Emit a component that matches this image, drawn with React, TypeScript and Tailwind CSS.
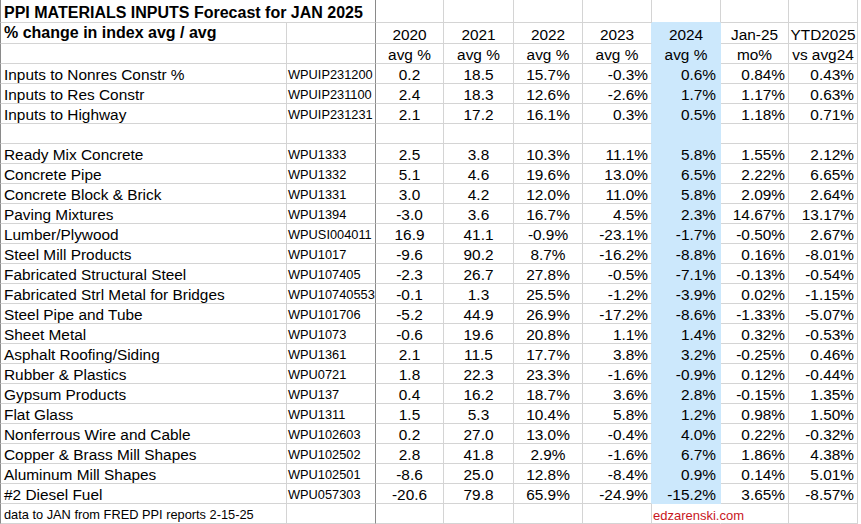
import React from "react";

type Row = [string, string, string, string, string, string, string, string, string];

const rows: (Row | null)[] = [
  ["Inputs to Nonres Constr %", "WPUIP231200", "0.2", "18.5", "15.7%", "-0.3%", "0.6%", "0.84%", "0.43%"],
  ["Inputs to Res Constr", "WPUIP231100", "2.4", "18.3", "12.6%", "-2.6%", "1.7%", "1.17%", "0.63%"],
  ["Inputs to Highway", "WPUIP231231", "2.1", "17.2", "16.1%", "0.3%", "0.5%", "1.18%", "0.71%"],
  null,
  ["Ready Mix Concrete", "WPU1333", "2.5", "3.8", "10.3%", "11.1%", "5.8%", "1.55%", "2.12%"],
  ["Concrete Pipe", "WPU1332", "5.1", "4.6", "19.6%", "13.0%", "6.5%", "2.22%", "6.65%"],
  ["Concrete Block & Brick", "WPU1331", "3.0", "4.2", "12.0%", "11.0%", "5.8%", "2.09%", "2.64%"],
  ["Paving Mixtures", "WPU1394", "-3.0", "3.6", "16.7%", "4.5%", "2.3%", "14.67%", "13.17%"],
  ["Lumber/Plywood", "WPUSI004011", "16.9", "41.1", "-0.9%", "-23.1%", "-1.7%", "-0.50%", "2.67%"],
  ["Steel Mill Products", "WPU1017", "-9.6", "90.2", "8.7%", "-16.2%", "-8.8%", "0.16%", "-8.01%"],
  ["Fabricated Structural Steel", "WPU107405", "-2.3", "26.7", "27.8%", "-0.5%", "-7.1%", "-0.13%", "-0.54%"],
  ["Fabricated Strl Metal for Bridges", "WPU10740553", "-0.1", "1.3", "25.5%", "-1.2%", "-3.9%", "0.02%", "-1.15%"],
  ["Steel Pipe and Tube", "WPU101706", "-5.2", "44.9", "26.9%", "-17.2%", "-8.6%", "-1.33%", "-5.07%"],
  ["Sheet Metal", "WPU1073", "-0.6", "19.6", "20.8%", "1.1%", "1.4%", "0.32%", "-0.53%"],
  ["Asphalt Roofing/Siding", "WPU1361", "2.1", "11.5", "17.7%", "3.8%", "3.2%", "-0.25%", "0.46%"],
  ["Rubber & Plastics", "WPU0721", "1.8", "22.3", "23.3%", "-1.6%", "-0.9%", "0.12%", "-0.44%"],
  ["Gypsum Products", "WPU137", "0.4", "16.2", "18.7%", "3.6%", "2.8%", "-0.15%", "1.35%"],
  ["Flat Glass", "WPU1311", "1.5", "5.3", "10.4%", "5.8%", "1.2%", "0.98%", "1.50%"],
  ["Nonferrous Wire and Cable", "WPU102603", "0.2", "27.0", "13.0%", "-0.4%", "4.0%", "0.22%", "-0.32%"],
  ["Copper & Brass Mill Shapes", "WPU102502", "2.8", "41.8", "2.9%", "-1.6%", "6.7%", "1.86%", "4.38%"],
  ["Aluminum Mill Shapes", "WPU102501", "-8.6", "25.0", "12.8%", "-8.4%", "0.9%", "0.14%", "5.01%"],
  ["#2 Diesel Fuel", "WPU057303", "-20.6", "79.8", "65.9%", "-24.9%", "-15.2%", "3.65%", "-8.57%"],
];

const cellA =
  "h-[20px] flex items-end leading-none whitespace-nowrap border-l border-r border-b border-l-[#8a8a8a] border-r-[#d4d4d4] border-b-[#d4d4d4] pl-[3px] pb-[1px] text-[15.4px]";
const cellB =
  "h-[20px] flex items-end leading-none whitespace-nowrap overflow-hidden border-r border-b border-r-[#8a8a8a] border-b-[#d4d4d4] pl-[1px] pb-[1px] text-[12.8px]";
const cellCenter =
  "h-[20px] flex items-end justify-center leading-none whitespace-nowrap border-r border-b border-r-[#d4d4d4] border-b-[#d4d4d4] pb-[1px] text-[15.4px]";
const cellF =
  "h-[20px] flex items-end justify-end leading-none whitespace-nowrap border-r border-b border-r-[#cce8fc] border-b-[#d4d4d4] pr-[3px] pb-[1px] text-[15.4px]";
const cellG =
  "h-[20px] flex items-end justify-end leading-none whitespace-nowrap bg-[#cce8fc] border-r border-b border-r-[#cce8fc] border-b-[#cce8fc] pr-[4px] pb-[1px] text-[15.4px]";
const cellRight =
  "h-[20px] flex items-end justify-end leading-none whitespace-nowrap border-r border-b border-r-[#d4d4d4] border-b-[#d4d4d4] pr-[3px] pb-[1px] text-[15.4px]";

function DataRow({ r }: { r: Row | null }) {
  const v = r ?? ["", "", "", "", "", "", "", "", ""];
  return (
    <>
      <div className={cellA}>{v[0]}</div>
      <div className={cellB}>{v[1]}</div>
      <div className={cellCenter}>{v[2]}</div>
      <div className={cellCenter}>{v[3]}</div>
      <div className={cellCenter}>{v[4]}</div>
      <div className={cellF}>{v[5]}</div>
      <div className={cellG}>{v[6]}</div>
      <div className={cellRight}>{v[7]}</div>
      <div className={cellRight}>{v[8]}</div>
    </>
  );
}

const hdrTop =
  "h-[23px] border-r border-b border-r-[#d4d4d4] border-b-[#d4d4d4]";
const hdr2 =
  "h-[21px] flex items-end justify-center leading-none whitespace-nowrap border-r border-b border-r-[#d4d4d4] border-b-[#d4d4d4] pb-[1px] text-[15.4px]";
const hdr2F =
  "h-[21px] flex items-end justify-center leading-none whitespace-nowrap border-r border-b border-r-[#cce8fc] border-b-[#d4d4d4] pb-[1px] text-[15.4px]";
const hdr2G =
  "h-[21px] flex items-end justify-center leading-none whitespace-nowrap bg-[#cce8fc] border-r border-b border-r-[#cce8fc] border-b-[#cce8fc] pb-[1px] text-[15.4px]";
const hdr3 =
  "h-[20px] flex items-end justify-center leading-none whitespace-nowrap border-r border-b border-r-[#d4d4d4] border-b-[#d4d4d4] pb-[1px] text-[15.4px]";
const hdr3F =
  "h-[20px] flex items-end justify-center leading-none whitespace-nowrap border-r border-b border-r-[#cce8fc] border-b-[#d4d4d4] pb-[1px] text-[15.4px]";
const hdr3G =
  "h-[20px] flex items-end justify-center leading-none whitespace-nowrap bg-[#cce8fc] border-r border-b border-r-[#cce8fc] border-b-[#cce8fc] pb-[1px] text-[15.4px]";
const footEmpty =
  "h-[20px] border-r border-b border-r-[#d4d4d4] border-b-[#d4d4d4]";

export default function App() {
  return (
    <div className="w-[861px] h-[524px] overflow-hidden bg-white text-black font-['Liberation_Sans',Arial,sans-serif]">
      <div className="grid grid-cols-[287px_89px_68px_70px_69px_69px_69px_68px_69px] w-[858px]">
        {/* Title row */}
        <div className="col-span-2 h-[23px] flex items-end leading-none whitespace-nowrap border-l border-r border-b border-l-[#8a8a8a] border-r-[#8a8a8a] border-b-[#d4d4d4] pl-[3px] pb-[1px] text-[16px] font-bold">
          PPI MATERIALS INPUTS Forecast for JAN 2025
        </div>
        <div className={hdrTop}></div>
        <div className={hdrTop}></div>
        <div className={hdrTop}></div>
        <div className={hdrTop}></div>
        <div className="h-[23px] border-r border-b border-r-[#d4d4d4] border-b-[#cce8fc]"></div>
        <div className={hdrTop}></div>
        <div className={hdrTop}></div>

        {/* Row 2 */}
        <div className="h-[21px] flex items-end leading-none whitespace-nowrap border-l border-r border-b border-l-[#8a8a8a] border-r-[#d4d4d4] border-b-[#d4d4d4] pl-[3px] pb-[2.5px] text-[16px] font-bold">
          % change in index avg / avg
        </div>
        <div className="h-[21px] border-r border-b border-r-[#8a8a8a] border-b-[#d4d4d4]"></div>
        <div className={hdr2}>2020</div>
        <div className={hdr2}>2021</div>
        <div className={hdr2}>2022</div>
        <div className={hdr2F}>2023</div>
        <div className={hdr2G}>2024</div>
        <div className={hdr2}>Jan-25</div>
        <div className={hdr2}>YTD2025</div>

        {/* Row 3 */}
        <div className="h-[20px] border-l border-r border-b border-l-[#8a8a8a] border-r-[#d4d4d4] border-b-[#d4d4d4]"></div>
        <div className="h-[20px] border-r border-b border-r-[#8a8a8a] border-b-[#d4d4d4]"></div>
        <div className={hdr3}>avg %</div>
        <div className={hdr3}>avg %</div>
        <div className={hdr3}>avg %</div>
        <div className={hdr3F}>avg %</div>
        <div className={hdr3G}>avg %</div>
        <div className={hdr3}>mo%</div>
        <div className={hdr3}>vs avg24</div>

        {rows.map((r, i) => (
          <DataRow key={i} r={r} />
        ))}

        {/* Footer */}
        <div className="h-[20px] flex items-end leading-none whitespace-nowrap border-l border-r border-b border-l-[#8a8a8a] border-r-[#d4d4d4] border-b-[#d4d4d4] pl-[3px] pb-[1px] text-[12.8px]">
          data to JAN from FRED PPI reports 2-15-25
        </div>
        <div className="h-[20px] border-r border-b border-r-[#8a8a8a] border-b-[#d4d4d4]"></div>
        <div className={footEmpty}></div>
        <div className={footEmpty}></div>
        <div className={footEmpty}></div>
        <div className={footEmpty}></div>
        <div className="h-[20px] flex items-end leading-none whitespace-nowrap overflow-visible border-r border-b border-r-transparent border-b-[#d4d4d4] pl-[1px] pb-[1px] text-[13px] text-[#c8161d]">
          edzarenski.com
        </div>
        <div className={footEmpty}></div>
        <div className={footEmpty}></div>
      </div>
    </div>
  );
}
